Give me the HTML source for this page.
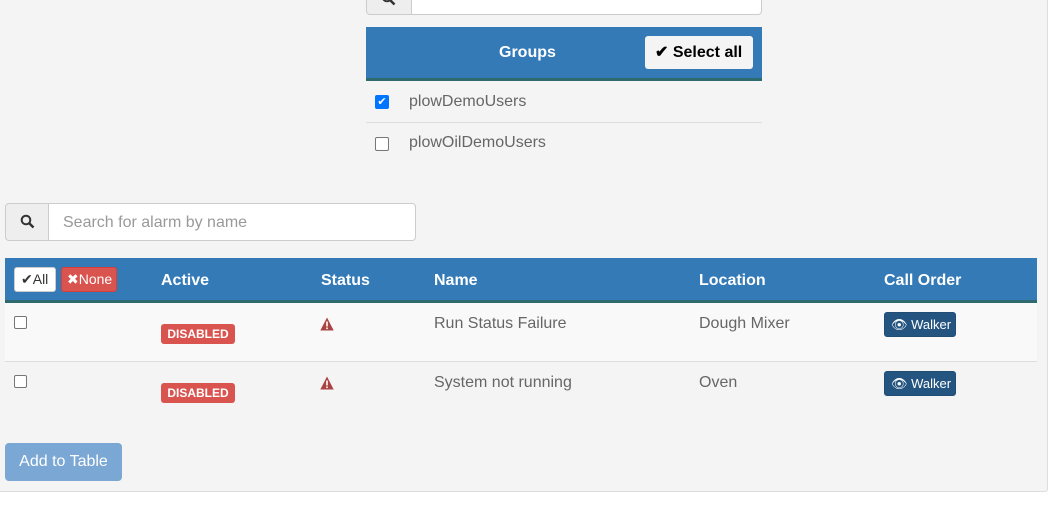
<!DOCTYPE html>
<html><head><meta charset="utf-8"><style>
*{box-sizing:border-box;margin:0;padding:0}
body{width:1063px;height:520px;background:#fff;font-family:"Liberation Sans",sans-serif;position:relative;overflow:hidden}
.panel{position:absolute;left:-2px;top:-2px;width:1050px;height:494px;background:#f4f4f4;border:1px solid #ddd;border-radius:3px}
.a{position:absolute}
.inp{background:#fff;border:1px solid #ccc;border-radius:4px}
.addon{background:#eee;border:1px solid #ccc;border-radius:4px 0 0 4px}
.hdr{background:#337ab7;border-bottom:3px solid #2e6b6f;color:#fff;font-weight:bold;font-size:16px}
.cb{width:13px;height:13px;border:1px solid #767676;border-radius:2px;background:#fff}
.t{color:#666;font-size:16px}
.lbl{background:#d9534f;color:#fff;font-weight:bold;font-size:12px;border-radius:3px;width:74px;height:20px;line-height:20px;text-align:center}
.wk{background:#245580;border:1px solid #204d74;color:#fff;font-size:13px;border-radius:3px;width:72px;height:25px;line-height:23px;padding-left:6px}
</style></head><body>
<div class="panel"></div>
<div class="a addon" style="left:366px;top:-20px;width:46px;height:35px"></div>
<svg class="a" style="left:381px;top:-9px" width="15" height="15" viewBox="0 0 15 15"><circle cx="6" cy="6" r="4.3" fill="none" stroke="#333" stroke-width="2"/><line x1="9" y1="9" x2="13.5" y2="13.5" stroke="#333" stroke-width="2.5"/></svg>
<div class="a inp" style="left:411px;top:-20px;width:351px;height:35px;border-radius:0 4px 4px 0"></div>
<div class="a hdr" style="left:366px;top:27px;width:396px;height:54px"></div>
<div class="a" style="left:499px;top:44px;color:#fff;font-weight:bold;font-size:16px">Groups</div>
<div class="a" style="left:645px;top:36px;width:108px;height:33px;background:#f4f4f4;border-radius:3px;font-weight:bold;font-size:16px;line-height:33px;padding-left:10px;color:#000">✔ Select all</div>
<div class="a" style="left:375px;top:95px;width:14px;height:14px;background:#0075ff;border-radius:2px;color:#fff;font-size:11px;line-height:14px;text-align:center">✔</div>
<div class="a t" style="left:409px;top:93px">plowDemoUsers</div>
<div class="a" style="left:366px;top:122px;width:396px;height:1px;background:#ddd"></div>
<div class="a cb" style="left:375px;top:137px;width:14px;height:14px"></div>
<div class="a t" style="left:409px;top:134px">plowOilDemoUsers</div>

<div class="a addon" style="left:5px;top:203px;width:44px;height:38px"></div>
<svg class="a" style="left:20px;top:214px" width="15" height="15" viewBox="0 0 15 15"><circle cx="6" cy="6" r="4.3" fill="none" stroke="#333" stroke-width="2"/><line x1="9" y1="9" x2="13.5" y2="13.5" stroke="#333" stroke-width="2.5"/></svg>
<div class="a inp" style="left:48px;top:203px;width:368px;height:38px;border-radius:0 4px 4px 0"></div>
<div class="a" style="left:63px;top:214px;color:#999;font-size:16px">Search for alarm by name</div>

<div class="a hdr" style="left:5px;top:258px;width:1032px;height:45px"></div>
<div class="a" style="left:14px;top:267px;width:42px;height:25px;background:#fff;border:1px solid #ccc;border-radius:3px;font-size:14px;line-height:23px;padding-left:6px;color:#333">✔All</div>
<div class="a" style="left:61px;top:267px;width:56px;height:25px;background:#d9534f;border:1px solid #d43f3a;border-radius:3px;font-size:14px;line-height:23px;padding-left:5px;color:#fff">✖None</div>
<div class="a" style="left:161px;top:272px;color:#fff;font-weight:bold;font-size:16px">Active</div>
<div class="a" style="left:321px;top:272px;color:#fff;font-weight:bold;font-size:16px">Status</div>
<div class="a" style="left:434px;top:272px;color:#fff;font-weight:bold;font-size:16px">Name</div>
<div class="a" style="left:699px;top:272px;color:#fff;font-weight:bold;font-size:16px">Location</div>
<div class="a" style="left:884px;top:272px;color:#fff;font-weight:bold;font-size:16px">Call Order</div>

<div class="a" style="left:5px;top:303px;width:1032px;height:59px;background:#f9f9f9;border-bottom:1px solid #ddd"></div>
<div class="a cb" style="left:14px;top:316px"></div>
<div class="a lbl" style="left:161px;top:324px">DISABLED</div>
<svg class="a" style="left:320px;top:317px" width="14" height="14" viewBox="0 0 14 14"><path d="M7 0.5L13.7 13.5H0.3Z" fill="#a94442"/><rect x="6.2" y="4.5" width="1.6" height="5" fill="#fff"/><rect x="6.2" y="10.5" width="1.6" height="1.6" fill="#fff"/></svg>
<div class="a t" style="left:434px;top:315px">Run Status Failure</div>
<div class="a t" style="left:699px;top:315px">Dough Mixer</div>
<div class="a wk" style="left:884px;top:312px">👁︎ Walker</div>

<div class="a cb" style="left:14px;top:375px"></div>
<div class="a lbl" style="left:161px;top:383px">DISABLED</div>
<svg class="a" style="left:320px;top:376px" width="14" height="14" viewBox="0 0 14 14"><path d="M7 0.5L13.7 13.5H0.3Z" fill="#a94442"/><rect x="6.2" y="4.5" width="1.6" height="5" fill="#fff"/><rect x="6.2" y="10.5" width="1.6" height="1.6" fill="#fff"/></svg>
<div class="a t" style="left:434px;top:374px">System not running</div>
<div class="a t" style="left:699px;top:374px">Oven</div>
<div class="a wk" style="left:884px;top:371px">👁︎ Walker</div>

<div class="a" style="left:5px;top:443px;width:117px;height:38px;background:#7aa7d3;border-radius:4px;color:#fff;font-size:16px;line-height:37px;text-align:center">Add to Table</div>
</body></html>
